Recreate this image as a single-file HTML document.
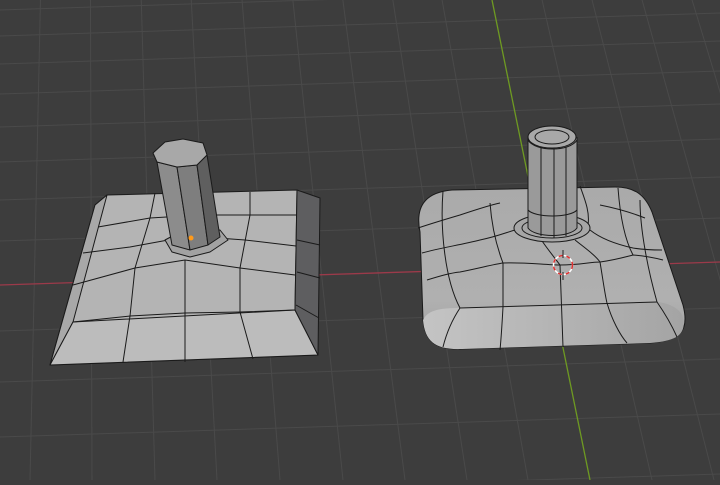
<!DOCTYPE html>
<html><head><style>html,body{margin:0;padding:0;background:#3d3d3d;overflow:hidden}</style></head>
<body>
<svg width="720" height="480" viewBox="0 0 720 480" xmlns="http://www.w3.org/2000/svg">
<rect width="720" height="480" fill="#3d3d3d"/>
<g stroke="#4a4a4a" stroke-width="1">
<line x1="84" y1="-2000" x2="-600" y2="480"/>
<line x1="84" y1="-2000" x2="-530" y2="480"/>
<line x1="84" y1="-2000" x2="-465" y2="480"/>
<line x1="84" y1="-2000" x2="-405" y2="480"/>
<line x1="84" y1="-2000" x2="-345" y2="480"/>
<line x1="84" y1="-2000" x2="-285" y2="480"/>
<line x1="84" y1="-2000" x2="-225" y2="480"/>
<line x1="84" y1="-2000" x2="-160" y2="480"/>
<line x1="84" y1="-2000" x2="-95" y2="480"/>
<line x1="84" y1="-2000" x2="-35" y2="480"/>
<line x1="84" y1="-2000" x2="30" y2="480"/>
<line x1="84" y1="-2000" x2="92" y2="480"/>
<line x1="84" y1="-2000" x2="155" y2="480"/>
<line x1="84" y1="-2000" x2="217" y2="480"/>
<line x1="84" y1="-2000" x2="280" y2="480"/>
<line x1="84" y1="-2000" x2="343" y2="480"/>
<line x1="84" y1="-2000" x2="405" y2="480"/>
<line x1="84" y1="-2000" x2="467" y2="480"/>
<line x1="84" y1="-2000" x2="528" y2="480"/>
<line x1="84" y1="-2000" x2="652" y2="480"/>
<line x1="84" y1="-2000" x2="714" y2="480"/>
<line x1="84" y1="-2000" x2="776" y2="480"/>
<line x1="84" y1="-2000" x2="838" y2="480"/>
<line x1="84" y1="-2000" x2="900" y2="480"/>
<line x1="84" y1="-2000" x2="962" y2="480"/>
<line x1="84" y1="-2000" x2="1024" y2="480"/>
<line x1="84" y1="-2000" x2="1086" y2="480"/>
<line x1="0" y1="10" x2="720" y2="-13"/>
<line x1="0" y1="36" x2="720" y2="13"/>
<line x1="0" y1="64" x2="720" y2="41"/>
<line x1="0" y1="94" x2="720" y2="71"/>
<line x1="0" y1="127" x2="720" y2="104"/>
<line x1="0" y1="162" x2="720" y2="139"/>
<line x1="0" y1="200" x2="720" y2="177"/>
<line x1="0" y1="241" x2="720" y2="218"/>
<line x1="0" y1="331" x2="720" y2="308"/>
<line x1="0" y1="382" x2="720" y2="359"/>
<line x1="0" y1="437" x2="720" y2="414"/>
<line x1="0" y1="497" x2="720" y2="474"/>
</g>
<line x1="0" y1="285" x2="720" y2="262" stroke="#9c3a4a" stroke-width="1.3"/>
<line x1="492" y1="0" x2="590" y2="480" stroke="#6e9a22" stroke-width="1.3"/>

<g stroke="#1a1a1a" stroke-width="1" stroke-linejoin="round">
<polygon points="95,205 107,195 297,190 295,310 318,355 50,365" fill="#b4b4b4"/>
<polygon points="95,205 107,195 73,322 50,365" fill="#a8a8a8"/>
<polygon points="73,322 295,310 318,355 50,365" fill="#bcbcbc"/>
<polygon points="297,190 320,198 318,355 295,310" fill="#5e5e60"/>
<polyline fill="none" points="83,253 130,247 190,236 245,240 296,246"/>
<polyline fill="none" points="73,285 135,268 185,260 240,268 295,275"/>
<polyline fill="none" points="98,227 150,218 200,215 250,215 297,215"/>
<polyline fill="none" points="73,322 130,316 185,313 240,312 295,310"/>
<polyline fill="none" points="123,362 130,316 135,268 150,218 155,193"/>
<polyline fill="none" points="185,362 185,313 185,260"/>
<polyline fill="none" points="253,359 240,312 240,268 250,215 250,192"/>
<line x1="297" y1="240" x2="320" y2="245"/>
<line x1="297" y1="272" x2="320" y2="278"/>
<line x1="296" y1="305" x2="319" y2="318"/>
<polygon points="165,240 172,252 190,257 210,252 228,240 220,230 180,232" fill="#a2a2a2"/>
<polygon points="157,162 177,167 190,250 172,245" fill="#8c8c8c"/>
<polygon points="177,167 197,165 208,245 190,250" fill="#7e7e7e"/>
<polygon points="197,165 207,155 220,237 208,245" fill="#5f5f5f"/>
<polygon points="153,153 165,142 183,139 203,143 207,155 197,165 177,167 157,162" fill="#a8a8a8"/>
</g>
<circle cx="191" cy="238" r="2.5" fill="#ff9a1a"/>

<defs>
<linearGradient id="rg" x1="0" y1="0" x2="0" y2="1">
<stop offset="0" stop-color="#aaaaaa"/><stop offset="0.7" stop-color="#b0b0b0"/><stop offset="1" stop-color="#a0a0a0"/>
</linearGradient>
<linearGradient id="bev" x1="0" y1="0" x2="1" y2="0">
<stop offset="0" stop-color="#c4c4c4"/><stop offset="1" stop-color="#a4a4a4"/>
</linearGradient>
</defs>
<g stroke="#1a1a1a" stroke-width="1" fill="none">
<path d="M420,232 C414,202 430,192 452,190 L615,187 C635,187 645,195 652,212 L683,305 C690,332 680,340 650,343 L462,349 C436,350 425,342 423,320 Z" fill="url(#rg)"/>
<path d="M423,320 C428,310 440,308 460,308 L657,302 C670,303 682,310 683,318 C686,334 678,341 650,343 L462,349 C436,350 425,342 423,320 Z" fill="url(#bev)" stroke="none"/>
<path d="M460,308 L657,302"/>
<!-- rows -->
<path d="M418,228 C430,224 443,220 460,215 C475,210 490,205 500,203"/>
<path d="M422,253 C440,248 460,245 480,240 C495,237 505,233 515,230"/>
<path d="M427,280 C440,276 450,273 460,272 C480,268 495,264 503,263 C525,262 545,265 560,265 C580,265 590,262 600,262 C615,260 625,257 633,255 C645,256 655,258 663,260"/>
<path d="M590,230 C600,238 615,244 633,248 C645,250 655,250 662,250"/>
<path d="M600,205 C615,208 630,212 645,218"/>
<!-- verticals -->
<path d="M443,191 C440,230 445,280 460,308 C452,320 446,335 443,347"/>
<path d="M490,203 C492,230 498,250 503,263 C503,280 503,295 503,307 C502,325 501,340 500,350"/>
<path d="M540,238 C548,250 555,258 560,265 C561,290 562,320 563,347"/>
<path d="M580,186 C585,200 590,212 588,225 M575,240 C585,248 595,255 600,262 C603,280 605,295 607,303 C612,320 620,335 627,343"/>
<path d="M640,200 C640,230 648,270 657,302 C666,315 673,328 677,337"/>
<path d="M618,188 C620,215 625,240 633,255"/>
<ellipse cx="552" cy="228" rx="38" ry="14" fill="#a6a6a6"/>
<ellipse cx="552" cy="228" rx="30" ry="10"/>
<path d="M528,137 L528,228 C535,238 570,238 577,228 L577,137" fill="#9a9a9a"/>
<path d="M528,140 C535,152 570,152 577,140"/>
<path d="M528,210 C535,218 570,218 577,210"/>
<line x1="541" y1="147" x2="541" y2="236"/>
<line x1="554" y1="149" x2="554" y2="238"/>
<line x1="566" y1="147" x2="566" y2="236"/>
<ellipse cx="552" cy="137" rx="24" ry="11" fill="#a8a8a8"/>
<ellipse cx="552" cy="137" rx="17" ry="7"/>
</g>
<circle cx="563" cy="265" r="9.5" fill="none" stroke="#fff" stroke-width="1.5"/>
<circle cx="563" cy="265" r="9.5" fill="none" stroke="#e03030" stroke-width="1.5" stroke-dasharray="4 4"/>
<line x1="563" y1="250" x2="563" y2="258" stroke="#222"/>
<line x1="563" y1="272" x2="563" y2="280" stroke="#222"/>
</svg>
</body></html>
